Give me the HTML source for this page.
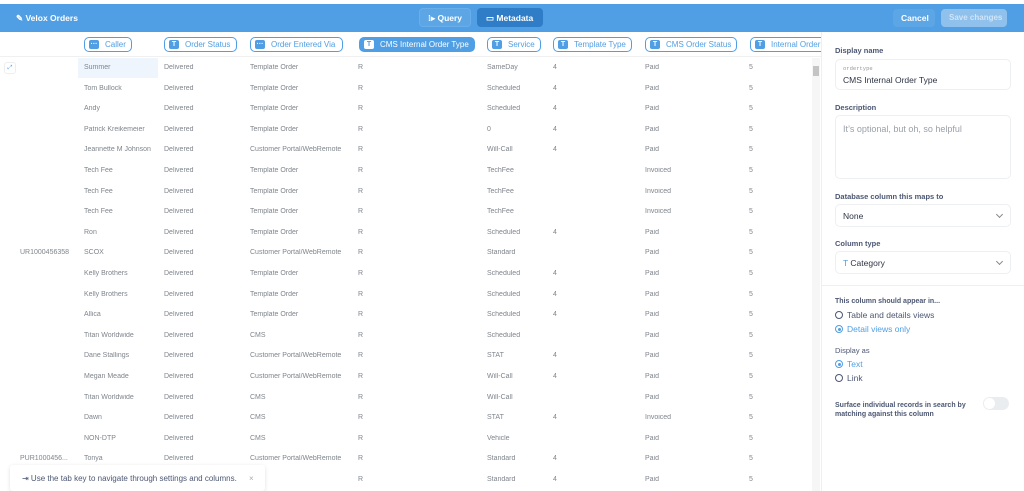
<!DOCTYPE html>
<html><head><meta charset="utf-8"><style>
*{box-sizing:border-box;margin:0;padding:0}
body{width:1024px;height:491px;overflow:hidden;background:#fff;font-family:"Liberation Sans",sans-serif;position:relative}
.top{position:absolute;left:0;top:4px;width:1024px;height:28px;background:#509ee3}
.abs{position:absolute}
.t{position:absolute;white-space:nowrap}
.pill{position:absolute;top:37px;height:15px;border:1px solid #509ee3;border-radius:5px;background:#fff;color:#509ee3;font-size:8px;line-height:13px;padding-left:20px;white-space:nowrap}
.pill i{position:absolute;left:4px;top:2px;width:10px;height:9px;background:#509ee3;border-radius:2px;color:#fff;font-style:normal;font-size:7px;font-weight:bold;line-height:9px;text-align:center}
.pill.sel{background:#509ee3;color:#fff}
.pill.sel i{background:#fff;color:#509ee3}
.row{position:absolute;left:0;width:812px;height:21px;font-size:7px;color:#7f858c;filter:blur(0.35px)}
.row span{position:absolute;top:6px;white-space:nowrap}
.lbl{position:absolute;left:835px;font-size:7.5px;font-weight:bold;color:#4c5773}
.box{position:absolute;left:835px;width:176px;border:1px solid #eeeff1;border-radius:5px;background:#fff}
.rad{position:absolute;left:835px;width:8px;height:8px;border:1px solid #4c5773;border-radius:50%}
.rad.on{border-color:#509ee3}
.rad.on:after{content:"";position:absolute;left:1.5px;top:1.5px;width:3px;height:3px;border-radius:50%;background:#509ee3}
.rt{position:absolute;left:847px;font-size:8.5px;color:#4c5773}
.chev{position:absolute;right:8px;top:7px;width:5px;height:5px;border-right:1px solid #888;border-bottom:1px solid #888;transform:rotate(45deg)}
</style></head><body>
<div class="top"></div>
<div class="t" style="left:16px;top:13px;color:#fff;font-size:8.5px;font-weight:bold">✎ Velox Orders</div>
<div class="abs" style="left:419px;top:8px;width:52px;height:19px;border-radius:4px;background:#5ca6e6;border:1px solid #69aee8"></div>
<div class="t" style="left:428px;top:13px;color:#fff;font-size:8.5px;font-weight:bold">⁞▸ Query</div>
<div class="abs" style="left:477px;top:8px;width:66px;height:19px;border-radius:4px;background:#2e7dc6"></div>
<div class="t" style="left:486px;top:13px;color:#fff;font-size:8.5px;font-weight:bold">▭ Metadata</div>
<div class="abs" style="left:893px;top:9px;width:42px;height:18px;border-radius:4px;background:#5ca6e6"></div>
<div class="t" style="left:901px;top:13px;color:#fff;font-size:8.5px;font-weight:bold">Cancel</div>
<div class="abs" style="left:941px;top:9px;width:66px;height:18px;border-radius:4px;background:#8fc1ec"></div>
<div class="t" style="left:949px;top:13px;color:#cfe4f7;font-size:8px;font-weight:bold">Save changes</div>

<div class="abs" style="left:0;top:32px;width:822px;height:25px;border-bottom:1px solid #f0f0f0"></div>
<div class="pill" style="left:84px;width:48px"><i>···</i>Caller</div>
<div class="pill" style="left:164px;width:73px"><i>T</i>Order Status</div>
<div class="pill" style="left:250px;width:93px"><i>···</i>Order Entered Via</div>
<div class="pill sel" style="left:359px;width:116px"><i>T</i>CMS Internal Order Type</div>
<div class="pill" style="left:487px;width:54px"><i>T</i>Service</div>
<div class="pill" style="left:553px;width:79px"><i>T</i>Template Type</div>
<div class="pill" style="left:645px;width:92px"><i>T</i>CMS Order Status</div>
<div class="pill" style="left:750px;width:72px;border-right:none;border-radius:5px 0 0 5px;overflow:hidden"><i>T</i>Internal Order</div>
<div class="abs" style="left:4px;top:62px;width:12px;height:12px;border:1px solid #eee;border-radius:3px;font-size:6px;color:#509ee3;text-align:center;line-height:10px">⤢</div>
<div class="abs" style="left:78px;top:58px;width:80px;height:20px;background:#eef5fc"></div>

<div id="rows"></div>
<div class="abs" style="left:812px;top:58px;width:8px;height:433px;background:#f6f6f6"></div>
<div class="abs" style="left:813px;top:66px;width:6px;height:10px;background:#c4c4c4"></div>
<div class="abs" style="left:821px;top:32px;width:1px;height:459px;background:#eceff3"></div>

<div class="abs" style="left:10px;top:465px;width:255px;height:26px;background:#fff;box-shadow:0 1px 4px rgba(0,0,0,.12);border-radius:3px"></div>
<div class="t" style="left:22px;top:474px;font-size:8px;color:#4c5773">⇥ Use the tab key to navigate through settings and columns.</div>
<div class="t" style="left:249px;top:474px;font-size:8px;color:#aaa">×</div>

<div class="lbl" style="top:46px">Display name</div>
<div class="box" style="top:59px;height:31px"></div>
<div class="t" style="left:843px;top:65px;font-size:5.5px;color:#999;font-family:'Liberation Mono',monospace">ordertype</div>
<div class="t" style="left:843px;top:75px;font-size:8.5px;color:#2e3545">CMS Internal Order Type</div>
<div class="lbl" style="top:103px">Description</div>
<div class="box" style="top:115px;height:64px"></div>
<div class="t" style="left:843px;top:124px;font-size:9px;color:#9aa0a8">It’s optional, but oh, so helpful</div>
<div class="lbl" style="top:192px">Database column this maps to</div>
<div class="box" style="top:204px;height:23px"><div class="chev"></div></div>
<div class="t" style="left:843px;top:211px;font-size:8.5px;color:#2e3545">None</div>
<div class="lbl" style="top:239px">Column type</div>
<div class="box" style="top:251px;height:23px"><div class="chev"></div></div>
<div class="t" style="left:843px;top:258px;font-size:8.5px;color:#2e3545"><span style="color:#509ee3">T</span> Category</div>
<div class="abs" style="left:822px;top:285px;width:202px;height:1px;background:#eceff3"></div>
<div class="lbl" style="top:298px;font-size:7px">This column should appear in...</div>
<div class="rad" style="top:311px"></div><div class="rt" style="top:310px">Table and details views</div>
<div class="rad on" style="top:325px"></div><div class="rt" style="top:324px;color:#509ee3">Detail views only</div>
<div class="lbl" style="top:346px;font-weight:normal;font-size:7.5px">Display as</div>
<div class="rad on" style="top:360px"></div><div class="rt" style="top:359px;color:#509ee3">Text</div>
<div class="rad" style="top:374px"></div><div class="rt" style="top:373px">Link</div>
<div class="lbl" style="top:401px;font-size:7px;line-height:9px">Surface individual records in search by<br>matching against this column</div>
<div class="abs" style="left:983px;top:397px;width:26px;height:13px;border-radius:7px;background:#eaedf0"></div>
<div class="abs" style="left:984px;top:398px;width:11px;height:11px;border-radius:50%;background:#fff"></div>

<script>
var d=[
["","Summer","Delivered","Template Order","R","SameDay","4","Paid","5"],
["","Tom Bullock","Delivered","Template Order","R","Scheduled","4","Paid","5"],
["","Andy","Delivered","Template Order","R","Scheduled","4","Paid","5"],
["","Patrick Kreikemeier","Delivered","Template Order","R","0","4","Paid","5"],
["","Jeannette M Johnson","Delivered","Customer Portal/WebRemote","R","Will-Call","4","Paid","5"],
["","Tech Fee","Delivered","Template Order","R","TechFee","","Invoiced","5"],
["","Tech Fee","Delivered","Template Order","R","TechFee","","Invoiced","5"],
["","Tech Fee","Delivered","Template Order","R","TechFee","","Invoiced","5"],
["","Ron","Delivered","Template Order","R","Scheduled","4","Paid","5"],
["UR1000456358","SCOX","Delivered","Customer Portal/WebRemote","R","Standard","","Paid","5"],
["","Kelly Brothers","Delivered","Template Order","R","Scheduled","4","Paid","5"],
["","Kelly Brothers","Delivered","Template Order","R","Scheduled","4","Paid","5"],
["","Allica","Delivered","Template Order","R","Scheduled","4","Paid","5"],
["","Titan Worldwide","Delivered","CMS","R","Scheduled","","Paid","5"],
["","Dane Stallings","Delivered","Customer Portal/WebRemote","R","STAT","4","Paid","5"],
["","Megan Meade","Delivered","Customer Portal/WebRemote","R","Will-Call","4","Paid","5"],
["","Titan Worldwide","Delivered","CMS","R","Will-Call","","Paid","5"],
["","Dawn","Delivered","CMS","R","STAT","4","Invoiced","5"],
["","NON-DTP","Delivered","CMS","R","Vehicle","","Paid","5"],
["PUR1000456...","Tonya","Delivered","Customer Portal/WebRemote","R","Standard","4","Paid","5"],
["","","","","R","Standard","4","Paid","5"]];
var x=[20,84,164,250,358,487,553,645,749],h="";
d.forEach(function(r,i){h+='<div class="row" style="top:'+(58+i*20.6)+'px">';r.forEach(function(c,j){if(c)h+='<span style="left:'+x[j]+'px">'+c+'</span>'});h+='</div>'});
document.getElementById('rows').innerHTML=h;
</script>
</body></html>
